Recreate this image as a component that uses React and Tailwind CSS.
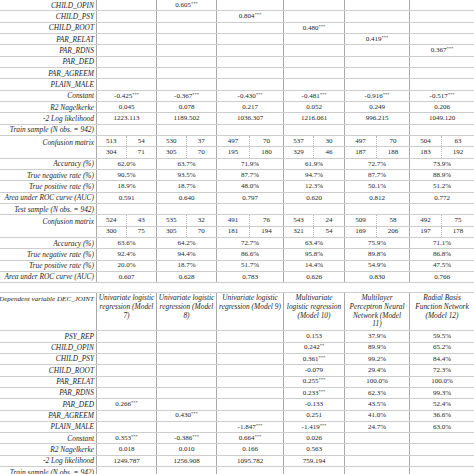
import React from "react";

const colW = ["w-[60px]", "w-[60px]", "w-[67px]", "w-[61px]", "w-[65px]", "w-[64px]"];

const s = (v, stars) => ({ v, stars });

const topRows = [
  ["CHILD_OPIN", [null, s("0.605", "***"), null, null, null, null]],
  ["CHILD_PSY", [null, null, s("0.804", "***"), null, null, null]],
  ["CHILD_ROOT", [null, null, null, s("0.480", "***"), null, null]],
  ["PAR_RELAT", [null, null, null, null, s("0.419", "***"), null]],
  ["PAR_RDNS", [null, null, null, null, null, s("0.367", "***")]],
  ["PAR_DED", []],
  ["PAR_AGREEM", []],
  ["PLAIN_MALE", []],
  ["Constant", [s("-0.425", "***"), s("-0.367", "***"), s("-0.430", "***"), s("-0.481", "***"), s("-0.916", "***"), s("-0.517", "***")]],
  ["R2 Nagelkerke", ["0.045", "0.078", "0.217", "0.052", "0.249", "0.206"]],
  ["-2 Log likelihood", ["1223.113", "1189.502", "1036.307", "1216.061", "996.215", "1049.120"]],
];

const samples = [
  {
    title: "Train sample (N obs. = 942)",
    cm: [
      [["513", "54"], ["530", "37"], ["497", "70"], ["537", "30"], ["497", "70"], ["504", "63"]],
      [["304", "71"], ["305", "70"], ["195", "180"], ["329", "46"], ["187", "188"], ["183", "192"]],
    ],
    stats: [
      ["Accuracy (%)", ["62.0%", "63.7%", "71.9%", "61.9%", "72.7%", "73.9%"]],
      ["True negative rate (%)", ["90.5%", "93.5%", "87.7%", "94.7%", "87.7%", "88.9%"]],
      ["True positive rate (%)", ["18.9%", "18.7%", "48.0%", "12.3%", "50.1%", "51.2%"]],
      ["Area under ROC curve (AUC)", ["0.591", "0.640", "0.797", "0.620", "0.812", "0.772"]],
    ],
  },
  {
    title: "Test sample (N obs. = 942)",
    cm: [
      [["524", "43"], ["535", "32"], ["491", "76"], ["543", "24"], ["509", "58"], ["492", "75"]],
      [["300", "75"], ["305", "70"], ["181", "194"], ["321", "54"], ["169", "206"], ["197", "178"]],
    ],
    stats: [
      ["Accuracy (%)", ["63.6%", "64.2%", "72.7%", "63.4%", "75.9%", "71.1%"]],
      ["True negative rate (%)", ["92.4%", "94.4%", "86.6%", "95.8%", "89.8%", "86.8%"]],
      ["True positive rate (%)", ["20.0%", "18.7%", "51.7%", "14.4%", "54.9%", "47.5%"]],
      ["Area under ROC curve (AUC)", ["0.607", "0.628", "0.783", "0.626", "0.830", "0.766"]],
    ],
  },
];

const headers = [
  ["Univariate logistic", "regression (Model", "7)"],
  ["Univariate logistic", "regression (Model", "8)"],
  ["Univariate logistic", "regression (Model 9)"],
  ["Multivariate", "logistic regression", "(Model 10)"],
  ["Multilayer", "Perceptron Neural", "Network (Model", "11)"],
  ["Radial Basis", "Function Network", "(Model 12)"],
];

const bottomRows = [
  ["PSY_REP", [null, null, null, "0.153", "37.9%", "59.5%"]],
  ["CHILD_OPIN", [null, null, null, s("0.242", "**"), "89.9%", "65.2%"]],
  ["CHILD_PSY", [null, null, null, s("0.361", "***"), "99.2%", "84.4%"]],
  ["CHILD_ROOT", [null, null, null, "-0.079", "29.4%", "72.3%"]],
  ["PAR_RELAT", [null, null, null, s("0.255", "***"), "100.0%", "100.0%"]],
  ["PAR_RDNS", [null, null, null, s("0.233", "***"), "62.3%", "99.3%"]],
  ["PAR_DED", [s("0.266", "***"), null, null, "-0.133", "43.5%", "52.4%"]],
  ["PAR_AGREEM", [null, s("0.430", "***"), null, "0.251", "41.0%", "36.6%"]],
  ["PLAIN_MALE", [null, null, s("-1.847", "***"), s("-1.419", "***"), "24.7%", "63.0%"]],
  ["Constant", [s("0.353", "***"), s("-0.386", "***"), s("0.664", "***"), "0.026", null, null]],
  ["R2 Nagelkerke", ["0.018", "0.010", "0.166", "0.563", null, null]],
  ["-2 Log likelihood", ["1249.787", "1256.908", "1095.782", "759.194", null, null]],
];

const Value = ({ cell }) => {
  if (!cell) return null;
  if (typeof cell === "string") return <span>{cell}</span>;
  return (
    <span>
      {cell.v}
      <span className="inline-block text-[4.5px] -translate-y-[2px]">{cell.stars}</span>
    </span>
  );
};

const Label = ({ children, className = "" }) => (
  <div
    className={`w-[97px] shrink-0 border-r border-[#a9a9a9] pr-[2px] text-right italic text-[7.4px] whitespace-nowrap flex justify-end ${className}`}
  >
    {children}
  </div>
);

const Row = ({ label, cells = [] }) => (
  <div className="flex h-[11.33px] border-b border-[#cdcdcd]">
    <Label className="items-center">{label}</Label>
    {colW.map((w, i) => (
      <div
        key={i}
        className={`${w} shrink-0 flex items-center justify-center text-[7px] ${i < 5 ? "border-r border-[#a9a9a9]" : ""}`}
      >
        <Value cell={cells[i]} />
      </div>
    ))}
  </div>
);

const CmRow = ({ pairs, className }) => (
  <div className={`flex ${className}`}>
    {colW.map((w, i) => (
      <div
        key={i}
        className={`${w} shrink-0 flex text-[7px] ${i < 5 ? "border-r border-[#a9a9a9]" : ""}`}
      >
        <div className="w-1/2 flex items-center justify-center border-r border-dotted border-[#b5b5b5]">
          {pairs[i][0]}
        </div>
        <div className="w-1/2 flex items-center justify-center">{pairs[i][1]}</div>
      </div>
    ))}
  </div>
);

const Sample = ({ sample }) => (
  <>
    <Row label={sample.title} />
    <div className="flex border-b border-[#cdcdcd]">
      <Label className="items-start pt-[1px]">Confusion matrix</Label>
      <div className="flex flex-col">
        <CmRow pairs={sample.cm[0]} className="h-[11.33px] border-b border-[#cdcdcd]" />
        <CmRow pairs={sample.cm[1]} className="h-[10.33px]" />
      </div>
    </div>
    {sample.stats.map(([label, cells]) => (
      <Row key={label} label={label} cells={cells} />
    ))}
  </>
);

export default function App() {
  return (
    <div
      className="w-[474px] h-[474px] overflow-hidden bg-white text-[#262626]"
      style={{ fontFamily: '"Liberation Serif", "DejaVu Serif", serif' }}
    >
      <div className="flex flex-col">
        {topRows.map(([label, cells]) => (
          <Row key={label} label={label} cells={cells} />
        ))}
        {samples.map((sm) => (
          <Sample key={sm.title} sample={sm} />
        ))}
      </div>

      <div className="h-[9px]" />

      <div className="flex flex-col">
        <div className="flex h-[39px] border-t border-b border-[#cdcdcd]">
          <div className="w-[97px] shrink-0 border-r border-[#a9a9a9] pr-[2px] pt-[2px] flex justify-end italic text-[7.1px] leading-[8.7px] whitespace-nowrap">
            Dependent variable DEC_JOINT
          </div>
          {colW.map((w, i) => (
            <div
              key={i}
              className={`${w} shrink-0 pt-[1px] text-center italic text-[7.4px] leading-[8.7px] ${i < 5 ? "border-r border-[#a9a9a9]" : ""}`}
            >
              {headers[i].map((line, j) => (
                <div key={j} className="whitespace-nowrap">{line}</div>
              ))}
            </div>
          ))}
        </div>
        {bottomRows.map(([label, cells]) => (
          <Row key={label} label={label} cells={cells} />
        ))}
        <Row label="Train sample (N obs. = 942)" />
      </div>
    </div>
  );
}
